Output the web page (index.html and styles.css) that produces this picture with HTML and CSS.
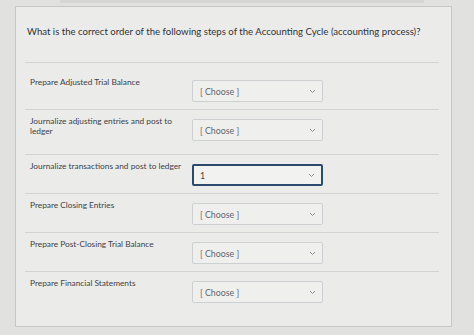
FILE: index.html
```html
<!DOCTYPE html>
<html lang="en">
<head>
    <meta charset="UTF-8">
    <title>Accounting Cycle Quiz</title>
    <link rel="stylesheet" href="styles.css">
</head>
<body>
    <div class="top-shade"></div>
    <div class="question-card">
        <div class="question-text">What is the correct order of the following steps of the Accounting Cycle (accounting process)?</div>
        <div class="answers">
            <div class="answer-row">
                <div class="answer-label">Prepare Adjusted Trial Balance</div>
                <div class="select-box">
                    <span>[ Choose ]</span>
                    <svg class="chevron" width="7" height="5" viewBox="0 0 7 5"><path d="M1 1 L3.5 3.5 L6 1" fill="none" stroke="#8a9096" stroke-width="1"/></svg>
                </div>
            </div>
            <div class="answer-row tall">
                <div class="answer-label">Journalize adjusting entries and post to ledger</div>
                <div class="select-box">
                    <span>[ Choose ]</span>
                    <svg class="chevron" width="7" height="5" viewBox="0 0 7 5"><path d="M1 1 L3.5 3.5 L6 1" fill="none" stroke="#8a9096" stroke-width="1"/></svg>
                </div>
            </div>
            <div class="answer-row">
                <div class="answer-label">Journalize transactions and post to ledger</div>
                <div class="select-box focused">
                    <span>1</span>
                    <svg class="chevron" width="7" height="5" viewBox="0 0 7 5"><path d="M1 1 L3.5 3.5 L6 1" fill="none" stroke="#8a9096" stroke-width="1"/></svg>
                </div>
            </div>
            <div class="answer-row">
                <div class="answer-label">Prepare Closing Entries</div>
                <div class="select-box">
                    <span>[ Choose ]</span>
                    <svg class="chevron" width="7" height="5" viewBox="0 0 7 5"><path d="M1 1 L3.5 3.5 L6 1" fill="none" stroke="#8a9096" stroke-width="1"/></svg>
                </div>
            </div>
            <div class="answer-row">
                <div class="answer-label">Prepare Post-Closing Trial Balance</div>
                <div class="select-box">
                    <span>[ Choose ]</span>
                    <svg class="chevron" width="7" height="5" viewBox="0 0 7 5"><path d="M1 1 L3.5 3.5 L6 1" fill="none" stroke="#8a9096" stroke-width="1"/></svg>
                </div>
            </div>
            <div class="answer-row last">
                <div class="answer-label">Prepare Financial Statements</div>
                <div class="select-box">
                    <span>[ Choose ]</span>
                    <svg class="chevron" width="7" height="5" viewBox="0 0 7 5"><path d="M1 1 L3.5 3.5 L6 1" fill="none" stroke="#8a9096" stroke-width="1"/></svg>
                </div>
            </div>
        </div>
    </div>
</body>
</html>
```

FILE: styles.css
```css
body {
    background-color: #e1e1df;
    margin: 0;
    padding: 0;
    font-family: Lato, "Open Sans", sans-serif;
    height: 335px;
    overflow: hidden;
}
.top-shade {
    height: 3px;
    margin: 0 50px 0 60px;
    background-color: #d6d6d4;
}
.question-card {
    margin: 3px 0 0 15px;
    width: 437px;
    height: 321px;
    background-color: #ebebea;
    border: 1px solid #c6c6c4;
    box-sizing: border-box;
}
.question-text {
    padding: 19px 0 0 2px;
    height: 36px;
    font-size: 9.6px;
    line-height: 12px;
    color: #2f3337;
    border-bottom: 1px solid #d4d4d2;
    margin: 0 12px 0 9px;
}
.answers {
    padding: 8px 12px 0 9px;
}
.answer-row {
    display: grid;
    grid-template-columns: 167px 131px;
    padding: 9px 0 7px;
    border-bottom: 1px solid #d4d4d2;
}
.answer-row.tall {
    padding-bottom: 13px;
}
.answer-row.last {
    border-bottom: none;
}
.answer-label {
    margin-top: -3px;
    padding: 0 4px 0 5px;
    font-size: 8.3px;
    line-height: 10px;
    color: #3d4246;
}
.answer-row.tall .answer-label {
    padding-right: 20px;
}
.select-box {
    height: 22px;
    box-sizing: border-box;
    border: 1px solid #cdd0d2;
    border-radius: 2px;
    background-color: #efefee;
    display: flex;
    align-items: center;
    justify-content: space-between;
    padding: 0 6px 0 7px;
    font-size: 8.8px;
    color: #61666b;
}
.select-box.focused {
    border: 2px solid #2c4a6e;
    background-color: #f2f2f1;
    padding-left: 6px;
    color: #444;
}
.chevron {
    display: block;
}
```
